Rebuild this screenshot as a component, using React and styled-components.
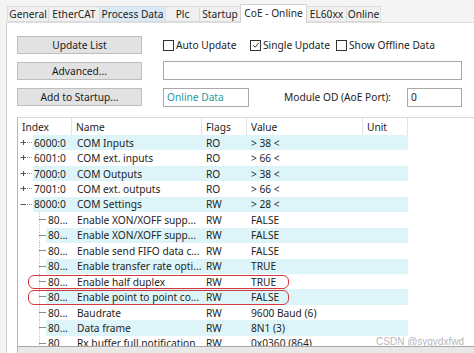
import React from "react"
import styled, { createGlobalStyle } from "styled-components"

const tabs = [
  { label: "General", w: 42 },
  { label: "EtherCAT", w: 52 },
  { label: "Process Data", w: 67, hover: true },
  { label: "Plc", w: 35 },
  { label: "Startup", w: 42 },
  { label: "CoE - Online", w: 67, active: true },
  { label: "EL60xx", w: 41 },
  { label: "Online", w: 35 },
]

const rows = [
  { idx: "6000:0", name: "COM Inputs", flags: "RO", value: "> 38 <", kind: "plus" },
  { idx: "6001:0", name: "COM ext. inputs", flags: "RO", value: "> 66 <", kind: "plus" },
  { idx: "7000:0", name: "COM Outputs", flags: "RO", value: "> 38 <", kind: "plus" },
  { idx: "7001:0", name: "COM ext. outputs", flags: "RO", value: "> 66 <", kind: "plus" },
  { idx: "8000:0", name: "COM Settings", flags: "RW", value: "> 28 <", kind: "minus" },
  { idx: "80...", name: "Enable XON/XOFF supp...", flags: "RW", value: "FALSE", kind: "child" },
  { idx: "80...", name: "Enable XON/XOFF supp...", flags: "RW", value: "FALSE", kind: "child" },
  { idx: "80...", name: "Enable send FIFO data c...", flags: "RW", value: "FALSE", kind: "child" },
  { idx: "80...", name: "Enable transfer rate opti...", flags: "RW", value: "TRUE", kind: "child" },
  { idx: "80...", name: "Enable half duplex", flags: "RW", value: "TRUE", kind: "child", mark: true },
  { idx: "80...", name: "Enable point to point co...", flags: "RW", value: "FALSE", kind: "child", mark: true },
  { idx: "80...", name: "Baudrate", flags: "RW", value: "9600 Baud (6)", kind: "child" },
  { idx: "80...", name: "Data frame", flags: "RW", value: "8N1 (3)", kind: "child" },
  { idx: "80", name: "Rx buffer full notification", flags: "RW", value: "0x0360 (864)", kind: "child" },
]

export default function App() {
  return (
    <>
      <GlobalStyle />
      <Window>
        <TabStrip>
          {tabs.map(t => (
            <Tab key={t.label} $w={t.w} $active={t.active} $hover={t.hover}>
              {t.label}
            </Tab>
          ))}
        </TabStrip>

        <Panel>
          <Controls>
            <Button>Update List</Button>
            <CheckRow>
              <Check label="Auto Update" w={87} />
              <Check label="Single Update" w={86} checked />
              <Check label="Show Offline Data" />
            </CheckRow>

            <Button>Advanced...</Button>
            <TextBox />

            <Button>Add to Startup...</Button>
            <InfoRow>
              <OnlineBox>Online Data</OnlineBox>
              <ModuleLabel>Module OD (AoE Port):</ModuleLabel>
              <PortBox>0</PortBox>
            </InfoRow>
          </Controls>

          <Table>
            <HeaderRow>
              <HeadCell>Index</HeadCell>
              <HeadCell>Name</HeadCell>
              <HeadCell>Flags</HeadCell>
              <HeadCell>Value</HeadCell>
              <HeadCell>Unit</HeadCell>
              <HeadCell $last />
            </HeaderRow>

            <Body>
              {rows.map((r, i) => (
                <TableRow key={i} {...r} stripe={i % 2 === 0} />
              ))}
            </Body>

            <HScroll />
            <Watermark>CSDN @sygydxfwd</Watermark>
          </Table>
        </Panel>
      </Window>
    </>
  )
}

const Check = ({ label, w, checked }) => (
  <CheckItem $w={w}>
    <Box>
      {checked && (
        <svg width="8" height="8" viewBox="0 0 8 8">
          <path d="M1.2 4.2 L3.2 6.2 L6.9 1.6" fill="none" stroke="#333" strokeWidth="1" />
        </svg>
      )}
    </Box>
    {label}
  </CheckItem>
)

const TableRow = ({ idx, name, flags, value, kind, mark, stripe }) => {
  const child = kind === "child"
  const gw = child ? 28 : 15

  return (
    <Row $mark={mark}>
      <Gutter $w={gw}>
        {child ? (
          <svg width="28" height="16">
            <line x1="21.5" y1="0" x2="21.5" y2="16" stroke="#c4c4c4" strokeDasharray="1 1" />
            <line x1="21" y1="7.5" x2="28" y2="7.5" stroke="#8c8c8c" />
          </svg>
        ) : (
          <svg width="15" height="16">
            <line x1="2.5" y1="7.5" x2="8" y2="7.5" stroke="#555" />
            {kind === "plus" && <line x1="5.5" y1="5" x2="5.5" y2="10" stroke="#555" />}
            <line x1="9" y1="7.5" x2="15" y2="7.5" stroke="#9a9a9a" strokeDasharray="1 1" />
          </svg>
        )}
      </Gutter>
      <Cells $w={390 - gw} $stripe={stripe}>
        <Cell $pad={child ? 2 : 1}>{idx}</Cell>
        <Cell $pad={5}>{name}</Cell>
        <Cell $pad={4}>{flags}</Cell>
        <Cell $pad={4}>{value}</Cell>
        <Cell $pad={4} />
      </Cells>
    </Row>
  )
}

const GlobalStyle = createGlobalStyle`
  html, body {
    margin: 0;
    padding: 0;
    background: #f4f4f4;
  }
  body {
    font-family: "Noto Sans", "Open Sans", sans-serif;
    font-size: 10.2px;
    color: #1e1e1e;
  }
`

const Window = styled.div`
  width: 474px;
  height: 353px;
  display: flex;
  flex-direction: column;
  overflow: hidden;
`

const TabStrip = styled.div`
  height: 22px;
  flex: none;
  display: flex;
  align-items: flex-end;
  padding-left: 7px;
  box-sizing: border-box;
  background: #f4f4f4;
`

const Tab = styled.div`
  width: ${p => p.$w}px;
  height: ${p => (p.$active ? 19 : 16)}px;
  box-sizing: border-box;
  margin-right: -1px;
  display: flex;
  align-items: center;
  justify-content: center;
  white-space: nowrap;
  padding-bottom: ${p => (p.$active ? 2 : 0)}px;
  background: ${p => (p.$active ? "#fff" : p.$hover ? "#d9e9f6" : "#f0f0f0")};
  border: 1px solid ${p => (p.$active ? "#d2d2d2" : "#dcdcdc")};
  border-bottom: ${p => (p.$active ? "none" : "1px solid #dcdcdc")};
  position: relative;
  z-index: ${p => (p.$active ? 2 : 1)};
  margin-bottom: ${p => (p.$active ? -1 : 0)}px;
`

const Panel = styled.div`
  flex: 1;
  min-height: 0;
  display: flex;
  flex-direction: column;
  margin-left: 6px;
  padding: 13px 0 0 10px;
  background: #fff;
  border-left: 1px solid #d0d0d0;
  border-top: 1px solid #dcdcdc;
`

const Controls = styled.div`
  display: grid;
  grid-template-columns: 125px 1fr;
  grid-auto-rows: 19px;
  column-gap: 21px;
  row-gap: 7px;
  padding-right: 12px;
`

const Button = styled.div`
  height: 18px;
  box-sizing: border-box;
  display: flex;
  align-items: center;
  justify-content: center;
  background: #e2e2e2;
  border: 1px solid #bdbdbd;
  color: #1a1a1a;
`

const CheckRow = styled.div`
  display: flex;
  align-items: center;
  height: 18px;
`

const CheckItem = styled.label`
  display: flex;
  align-items: center;
  flex: none;
  width: ${p => (p.$w ? `${p.$w}px` : "auto")};
  white-space: nowrap;
`

const Box = styled.span`
  width: 11px;
  height: 11px;
  box-sizing: border-box;
  margin-right: 2px;
  border: 1px solid #333;
  background: #fff;
  display: flex;
  align-items: center;
  justify-content: center;
`

const TextBox = styled.div`
  height: 19px;
  box-sizing: border-box;
  margin-top: -1px;
  border: 1px solid #a9a9a9;
  background: #fff;
`

const InfoRow = styled.div`
  display: flex;
  align-items: center;
  margin-top: -1px;
`

const OnlineBox = styled.div`
  width: 86px;
  height: 19px;
  box-sizing: border-box;
  padding-left: 3px;
  display: flex;
  align-items: center;
  border: 1px solid #a9a9a9;
  color: #2a9a9c;
`

const ModuleLabel = styled.span`
  margin-left: 35px;
  white-space: nowrap;
`

const PortBox = styled(OnlineBox)`
  width: 55px;
  margin-left: auto;
  color: #1e1e1e;
`

const Table = styled.div`
  position: relative;
  flex: 1;
  min-height: 0;
  display: flex;
  flex-direction: column;
  margin-top: 10px;
  border-top: 1px solid #d6d6d6;
  border-left: 1px solid #b8b8b8;
`

const HeaderRow = styled.div`
  height: 17px;
  flex: none;
  display: grid;
  grid-template-columns: 54px 130px 45px 116px 45px 1fr;
`

const HeadCell = styled.div`
  display: flex;
  align-items: center;
  padding-left: 4px;
  border-right: ${p => (p.$last ? "none" : "1px solid #e4e4e4")};
`

const Body = styled.div`
  flex: 1;
  min-height: 0;
  overflow: hidden;
`

const Row = styled.div`
  position: relative;
  height: 15.45px;
  display: flex;

  &::after {
    content: "";
    display: ${p => (p.$mark ? "block" : "none")};
    position: absolute;
    left: 10px;
    top: 1px;
    width: 261px;
    height: 14.5px;
    box-sizing: border-box;
    border: 1.5px solid #d33a40;
    border-radius: 6px;
    pointer-events: none;
  }
`

const Gutter = styled.div`
  width: ${p => p.$w}px;
  flex: none;
  overflow: hidden;

  svg {
    display: block;
  }
`

const Cells = styled.div`
  width: ${p => p.$w}px;
  flex: none;
  display: grid;
  grid-template-columns: 1fr 130px 45px 116px 45px;
  align-items: center;
  background: ${p => (p.$stripe ? "#ddf5f9" : "transparent")};
`

const Cell = styled.div`
  padding-left: ${p => p.$pad}px;
  white-space: nowrap;
  overflow: hidden;
`

const HScroll = styled.div`
  height: 6px;
  flex: none;
  background: #e8e8e8;
  border-top: 1px solid #a6a6a6;
`

const Watermark = styled.div`
  position: absolute;
  right: 10px;
  bottom: 6px;
  font-family: "Liberation Sans", Arial, sans-serif;
  font-size: 10px;
  color: #b8b8b8;
`
